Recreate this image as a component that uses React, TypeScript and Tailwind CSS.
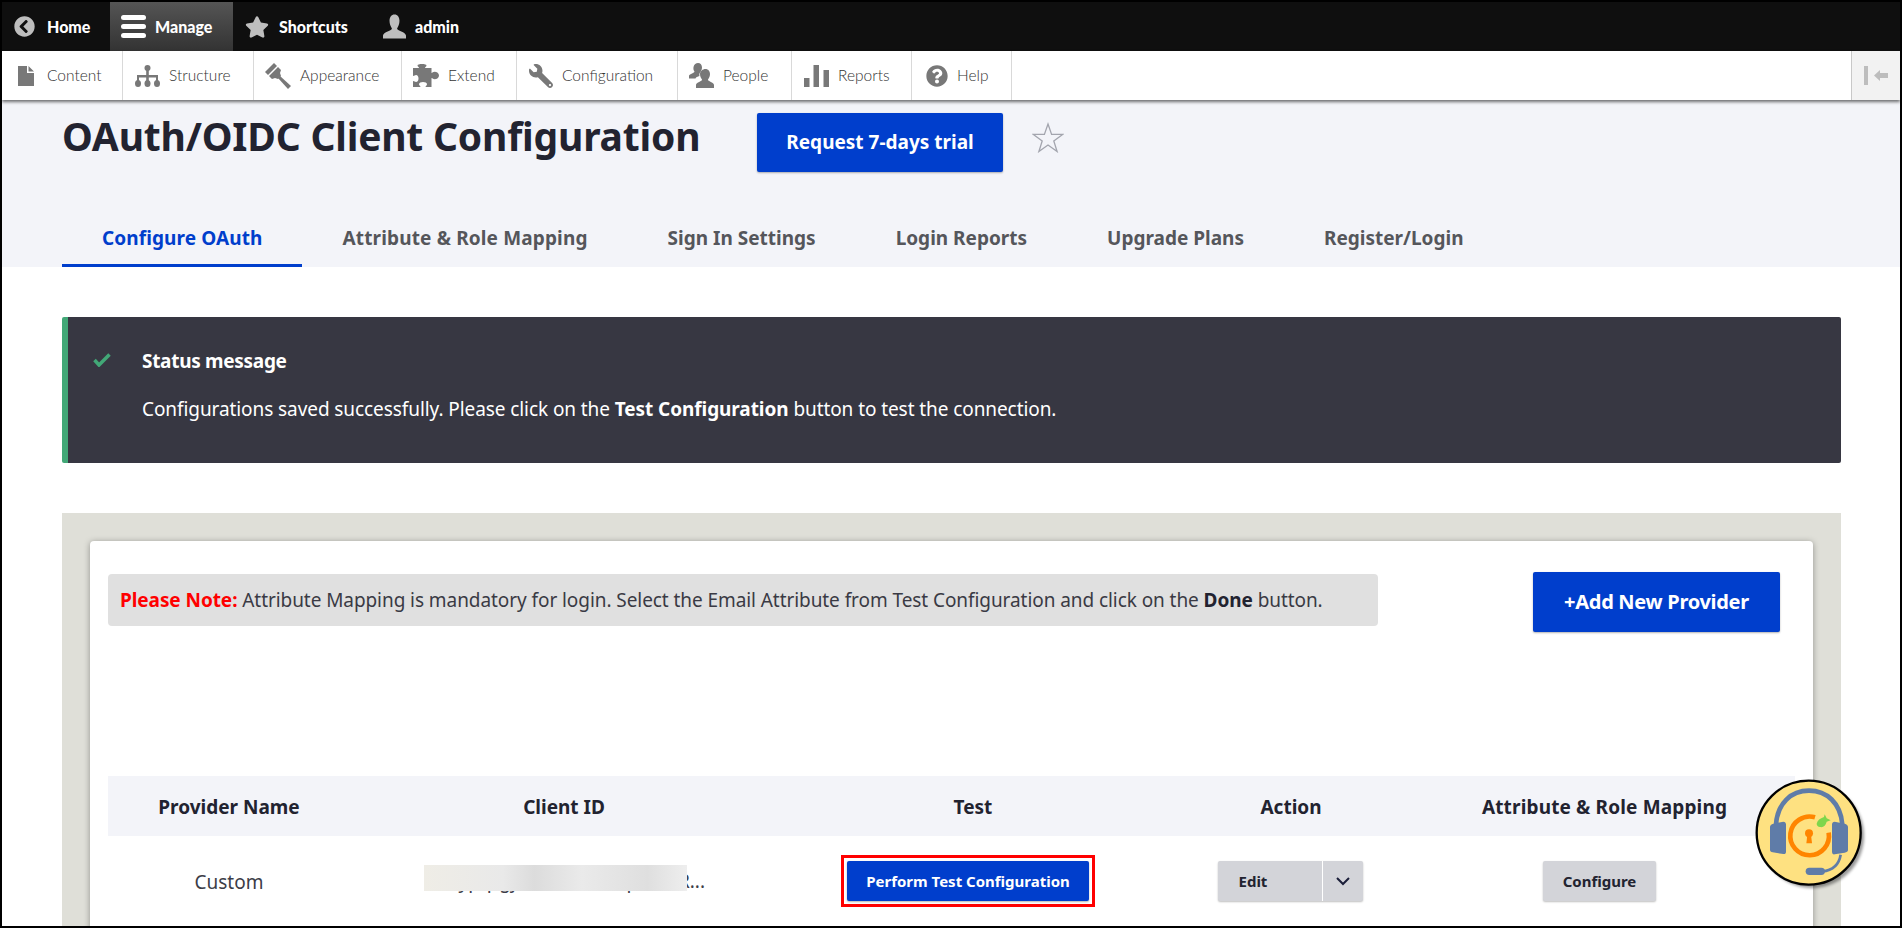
import { FaChevronCircleLeft, FaStar, FaWrench, FaQuestionCircle } from "react-icons/fa";

const trayItems = [
  { label: "Content", w: "w-[121px]", pl: "pl-[16px] gap-[13px]", icon: <ContentIcon /> },
  { label: "Structure", w: "w-[131px]", pl: "pl-[12px] gap-[9px]", icon: <StructureIcon /> },
  { label: "Appearance", w: "w-[148px]", pl: "pl-[11px] gap-[9px]", icon: <BrushIcon /> },
  { label: "Extend", w: "w-[115px]", pl: "pl-[11px] gap-[9px]", icon: <PuzzleIcon /> },
  { label: "Configuration", w: "w-[161px]", pl: "pl-[12px] gap-[9px]", icon: <FaWrench className="w-[24px] h-[24px] -scale-x-100 text-[#787878]" /> },
  { label: "People", w: "w-[114px]", pl: "pl-[11px] gap-[9px]", icon: <PeopleIcon /> },
  { label: "Reports", w: "w-[120px]", pl: "pl-[12px] gap-[9px]", icon: <BarsIcon /> },
  { label: "Help", w: "w-[100px]", pl: "pl-[14px] gap-[9px]", icon: <FaQuestionCircle className="w-[22px] h-[22px] text-[#787878]" /> },
];

const tabs = [
  { label: "Configure OAuth", cls: "text-[#003ecc] border-[#003ecc] tracking-[0.1px]" },
  { label: "Attribute & Role Mapping", cls: "text-[#55565b] border-transparent tracking-[0.15px]" },
  { label: "Sign In Settings", cls: "text-[#55565b] border-transparent" },
  { label: "Login Reports", cls: "text-[#55565b] border-transparent" },
  { label: "Upgrade Plans", cls: "text-[#55565b] border-transparent" },
  { label: "Register/Login", cls: "text-[#55565b] border-transparent" },
];

function ContentIcon() {
  return (
    <svg viewBox="0 0 16 20" className="w-[16px] h-[20px]">
      <path d="M0 0h9v7h7v13H0zM10.500 0L16 5.500h-5.500z" fill="#787878" />
    </svg>
  );
}

function StructureIcon() {
  return (
    <svg viewBox="0 0 25 22" className="w-[25px] h-[22px]" fill="#787878">
      <circle cx="12.500" cy="3" r="3" />
      <path d="M11.200 5h2.600v5H23v6h-2v-3.500h-7.200V16h-2.600v-3.500H4V16H2v-6h9.200z" />
      <ellipse cx="3" cy="18.500" rx="3" ry="3.500" />
      <ellipse cx="12.500" cy="18.500" rx="3" ry="3.500" />
      <ellipse cx="22" cy="18.500" rx="3" ry="3.500" />
    </svg>
  );
}

function BrushIcon() {
  return (
    <svg viewBox="0 0 26 26" className="w-[26px] h-[26px]" fill="#787878">
      <path d="M9 0L0 9l3 3L12 3z" />
      <path d="M13 4l-9 9 3 3 3-1 3 1 3-3-1-3 1-3z" />
      <path d="M15 13l11 10-3 3-10-11z" />
    </svg>
  );
}

function PuzzleIcon() {
  return (
    <svg viewBox="0 0 26 23" className="w-[26px] h-[23px]" fill="#787878">
      <path d="M0 4h6C6 3 4.500 2.500 4.500 1.500 4.500 .5 6.500 0 9 0s4.500.5 4.500 1.500C13.500 2.500 12 3 12 4h6.500v5c1 0 1.500-1.200 3-1.200 2.500 0 4.500 1.500 4.500 3.700s-2 3.700-4.500 3.700c-1.500 0-2-1.200-3-1.200V23h-6c0-1 1.500-1.500 1.500-2.700 0-1.500-2-2.300-4-2.300s-4 .8-4 2.300c0 1.200 1.500 1.700 1.500 2.700H0v-6c1.500 0 2 1 3 1 1.500 0 2.500-1.500 2.500-3.500S4.500 11 3 11c-1 0-1.500 1-3 1z" />
    </svg>
  );
}

function PeopleIcon() {
  return (
    <svg viewBox="0 0 25 25" className="w-[25px] h-[25px]" fill="#787878">
      <path d="M9 0c2.500 0 4 2 4 4.500 0 2-1 3.500-1.500 4.500-1 1-1.500 2.500-1 4-2 .5-3.500 1-4 2.500H0v-2.500c0-2 5-2.500 5.500-4.500C4 7 4.500 4.500 4.500 4 5 1.500 7 0 9 0z" />
      <path d="M16.500 6c2.700 0 4.500 2.200 4.500 5 0 2-.8 4-2 5.500-.5 2 6 2.500 6 5.500v3H7v-3c0-3 6.500-3.500 6-5.500-1.200-1.500-2-3.500-2-5.500 0-2.800 2.800-5 5.500-5z" />
    </svg>
  );
}

function BarsIcon() {
  return (
    <svg viewBox="0 0 25 22" className="w-[25px] h-[22px]" fill="#787878">
      <path d="M0 13h5.500v9H0zM9.500 0H15v22H9.500zM19.500 5H25v17h-5.500z" />
    </svg>
  );
}

function PersonIcon() {
  return (
    <svg viewBox="0 0 24 25" className="w-[23px] h-[25px]" fill="#bebebe">
      <path d="M12 0c3.200 0 5.200 2.800 5.200 6.500 0 3.200-1.200 6-2.500 8-.5 2.500 9.300 3.500 9.300 7.500v3H0v-3c0-4 9.800-5 9.300-7.500C8 12.500 6.800 9.700 6.800 6.500 6.800 2.800 8.800 0 12 0z" />
    </svg>
  );
}

function SupportBadge() {
  return (
    <svg viewBox="100 55 345 345" className="w-[115px] h-[115px]">
      <circle cx="274" cy="229" r="156" fill="#000" opacity=".4" className="blur-[4px]" />
      <circle cx="264" cy="219" r="156" fill="#fee181" stroke="#000" strokeWidth="7" />
      <path d="M166 195C170 130 212 93 265 93s95 37 100 102" fill="none" stroke="#5f7ca8" strokeWidth="14" />
      <path d="M158 192l30-6c5 0 8 4 8 8v82c0 5-3 8-8 7l-32-5c-5-1-8-3-8-8v-68c0-5 4-9 10-10z" fill="#5f7ca8" />
      <path d="M372 192l-30-6c-5 0-8 4-8 8v82c0 5 3 9 8 8l30-5c6-1 10-3 10-8v-69c0-5-4-9-10-10z" fill="#5f7ca8" />
      <path d="M360 285c-5 30-25 47-55 50" fill="none" stroke="#5f7ca8" strokeWidth="8" />
      <rect x="255" y="324" width="58" height="22" rx="11" fill="#5f7ca8" />
      <path d="M283 173a58 58 0 1 0 41 46" fill="none" stroke="#ff8500" strokeWidth="14" />
      <circle cx="265" cy="221" r="12" fill="#ff8500" />
      <path d="M260 226h11l3 25h-17z" fill="#ff8500" />
      <path d="M288 192c2-10 10-16 22-20l2-8 6 12 12 6-12 4c-3 12-10 18-20 16-6-1-10-5-10-10z" fill="#7ed64c" />
    </svg>
  );
}

export default function App() {
  return (
    <div className="relative w-[1902px] h-[928px] border-2 border-black overflow-hidden flex flex-col bg-white text-[#222330] font-['Noto_Sans',sans-serif]">
      {/* toolbar bar */}
      <div className="h-[49px] shrink-0 bg-[#0f0f0f] flex items-center text-white font-['Lato',sans-serif] font-black text-[16px]">
        <div className="w-[108px] h-full flex items-center pl-[12px] gap-[12px]">
          <FaChevronCircleLeft className="w-[21px] h-[21px] text-[#bebebe]" />
          <span>Home</span>
        </div>
        <div className="w-[123px] h-full flex items-center pl-[11px] gap-[9px] bg-gradient-to-b from-[#555] to-[#333]">
          <div className="w-[25px] flex flex-col gap-[4px]">
            <div className="h-[5px] rounded-full bg-white" />
            <div className="h-[5px] rounded-full bg-white" />
            <div className="h-[5px] rounded-full bg-white" />
          </div>
          <span>Manage</span>
        </div>
        <div className="flex items-center pl-[12px] gap-[10px]">
          <FaStar className="w-[24px] h-[24px] text-[#bebebe]" />
          <span>Shortcuts</span>
        </div>
        <div className="flex items-center pl-[35px] gap-[9px]">
          <PersonIcon />
          <span>admin</span>
        </div>
      </div>

      {/* tray */}
      <div className="relative z-10 h-[49px] shrink-0 bg-white flex items-center shadow-[0_2px_3px_rgba(0,0,0,0.55)] font-['Lato',sans-serif] font-light text-[15.5px] text-[#333333]">
        {trayItems.map((item) => (
          <div key={item.label} className={`${item.w} ${item.pl} h-full flex items-center border-r border-[#d9d9d9]`}>
            {item.icon}
            <span>{item.label}</span>
          </div>
        ))}
        <div className="ml-auto w-[49px] h-full flex items-center justify-center gap-[6px] bg-[#f2f2f2] border-l border-[#c8c8c8]">
          <div className="w-[4px] h-[19px] bg-[#bdbdbd]" />
          <svg viewBox="0 0 14 11" className="w-[14px] h-[11px]">
            <path d="M0 5.500L6 0v3h8v5H6v3z" fill="#bdbdbd" />
          </svg>
        </div>
      </div>

      {/* page header */}
      <div className="h-[167px] shrink-0 bg-[#f3f4f9] flex flex-col">
        <div className="flex items-start pl-[60px] pt-[13px]">
          <h1 className="text-[39px] font-bold leading-[50px] w-[695px] mt-[-2px] tracking-[-0.2px]">OAuth/OIDC Client Configuration</h1>
          <button className="w-[246px] h-[59px] rounded-[2px] bg-[#003ecc] text-white text-[19px] font-bold shadow-[0_1px_2px_rgba(0,0,0,0.3)]">
            Request 7-days trial
          </button>
          <svg viewBox="0 0 32 31" className="w-[32px] h-[31px] ml-[29px] mt-[9px]">
            <path d="M16 2l3.600 10.400h11L21.800 19l3.300 10.500L16 23l-9.100 6.500L10.200 19 1.400 12.400h11z" fill="none" stroke="#a3a5ae" strokeWidth="1.300" />
          </svg>
        </div>
        <div className="mt-auto flex pl-[60px]">
          {tabs.map((tab) => (
            <div key={tab.label} className={`h-[56px] px-[40px] pt-[2px] flex items-center text-[19px] font-bold border-b-[3px] ${tab.cls}`}>
              {tab.label}
            </div>
          ))}
        </div>
      </div>

      {/* content */}
      <div className="flex-1 min-h-0 flex flex-col pl-[60px] pr-[59px] pt-[50px]">
        <div className="h-[146px] shrink-0 rounded-[2px] bg-[#373742] border-l-[6px] border-[#42a877] text-white flex pl-[25px] pt-[34px]">
          <svg viewBox="0 0 18 14" className="w-[18px] h-[14px] mt-[2px]">
            <path d="M1.500 7l4.500 5L16.500 1.500" fill="none" stroke="#42a877" strokeWidth="3.500" />
          </svg>
          <div className="ml-[31px] text-[19px] tracking-[-0.08px]">
            <div className="font-bold leading-[20px] tracking-[-0.3px]">Status message</div>
            <div className="mt-[28px] leading-[20px]">
              Configurations saved successfully. Please click on the <b>Test Configuration</b> button to test the connection.
            </div>
          </div>
        </div>

        <div className="mt-[50px] flex-1 min-h-0 bg-[#dfdfd8] px-[28px] pt-[28px]">
          <div className="h-[500px] rounded-[4px] bg-white px-[18px] pt-[31px] shadow-[0_1px_6px_rgba(0,0,0,0.35)]">
            <div className="flex items-start justify-between pr-[15px]">
              <div className="w-[1270px] h-[52px] mt-[2px] rounded-[4px] bg-[#e0e0e0] flex items-center pl-[12px] text-[19px] text-[#3a3a44] tracking-[-0.07px]">
                <span>
                  <b className="text-[#ff0000]">Please Note:</b> Attribute Mapping is mandatory for login. Select the Email Attribute from Test Configuration and click on the <b className="text-[#222330]">Done</b> button.
                </span>
              </div>
              <button className="w-[247px] h-[60px] rounded-[2px] bg-[#003ecc] text-white text-[20px] font-bold shadow-[0_1px_2px_rgba(0,0,0,0.3)] tracking-[-0.3px]">
                +Add New Provider
              </button>
            </div>

            {/* providers table */}
            <div className="mt-[144px] h-[60px] grid grid-cols-[242px_428px_390px_246px_381px] items-center bg-[#f3f4f9] text-center text-[19px] font-bold pt-[2px]">
              <div>Provider Name</div>
              <div>Client ID</div>
              <div>Test</div>
              <div>Action</div>
              <div className="tracking-[0.15px]">Attribute &amp; Role Mapping</div>
            </div>
            <div className="grid grid-cols-[242px_428px_390px_246px_381px] items-center pt-[25px] text-center text-[19px]">
              <div className="text-[#3c3d47] pt-[2px]">Custom</div>
              <div className="relative flex justify-center">
                <div className="w-[282px] flex justify-end whitespace-nowrap overflow-hidden text-[#3c3d47]">
                  <span className="shrink-0">ypqrgjxxxxxxxxxxxpxxxxR...</span>
                </div>
                <div className="absolute left-[74px] top-[-2px] w-[263px] h-[26px] bg-[linear-gradient(90deg,#efede6,#e9e9e9_30%,#dcdcdc_42%,#eaeaea_60%,#dfdfdf_85%,#eeeeee)]" />
              </div>
              <div className="flex justify-center">
                <div className="border-[3px] border-[#ff0000] p-[3px] -my-[6px] mr-[10px]">
                  <button className="block w-[242px] h-[40px] rounded-[2px] bg-[#003ecc] text-white text-[15px] font-bold shadow-[0_1px_2px_rgba(0,0,0,0.3)]">
                    Perform Test Configuration
                  </button>
                </div>
              </div>
              <div className="flex justify-center">
                <div className="w-[145px] h-[40px] mr-[2px] flex rounded-[2px] bg-[#d3d4d9] text-[15px] font-bold shadow-[0_1px_2px_rgba(0,0,0,0.25)]">
                  <div className="w-[104px] flex items-center pl-[21px]">Edit</div>
                  <div className="flex-1 flex items-center justify-center border-l border-white">
                    <svg viewBox="0 0 14 9" className="w-[14px] h-[9px]">
                      <path d="M1 1l6 6 6-6" fill="none" stroke="#1b1f3a" strokeWidth="2" />
                    </svg>
                  </div>
                </div>
              </div>
              <div className="flex justify-center">
                <button className="w-[113px] h-[40px] mr-[10px] rounded-[2px] bg-[#d3d4d9] text-[15px] font-bold shadow-[0_1px_2px_rgba(0,0,0,0.25)]">
                  Configure
                </button>
              </div>
            </div>
          </div>
        </div>
      </div>

      {/* support badge over the page */}
      <div className="absolute left-[1752px] top-[776px]">
        <SupportBadge />
      </div>
    </div>
  );
}
